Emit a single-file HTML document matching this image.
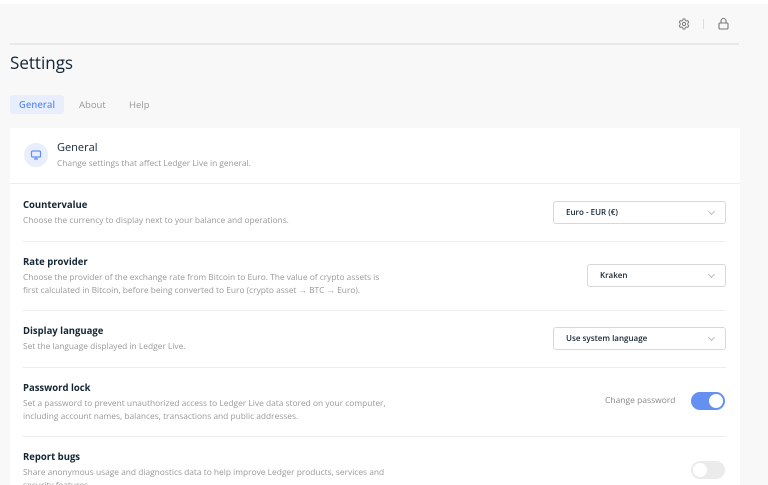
<!DOCTYPE html>
<html><head><meta charset="utf-8"><style>
*{margin:0;padding:0;box-sizing:border-box}
html,body{width:768px;height:485px;overflow:hidden}
body{background:#f8f8f8;font-family:"Open Sans","Liberation Sans","DejaVu Sans",sans-serif;position:relative;color:#142533}
.a{position:absolute}
.top{left:0;top:0;width:768px;height:4px;background:#fff}
.hr{left:10px;top:43px;width:729px;height:2px;background:#e8e8e8}
h1{position:absolute;left:10px;top:51px;font-size:17px;font-weight:400;color:#142533}
.tab{position:absolute;top:95px;height:19px;font-size:9.5px;line-height:19px;color:#999}
.card{left:10px;top:128px;width:730px;height:360px;background:#fff}
.t{font-size:9.5px;font-weight:700;color:#142533;position:absolute}
.d{font-size:8.4px;color:#999;position:absolute;line-height:12.5px}
.line{position:absolute;left:23px;width:703px;height:1px;background:#eee}
.sel{position:absolute;height:23px;border:1px solid #d8d8d8;border-radius:3px;font-size:8px;font-weight:600;color:#142533;line-height:21px;padding-left:12px}
.sel:after{content:"";position:absolute;right:11px;top:7px;width:4px;height:4px;border-right:1px solid #bbb;border-bottom:1px solid #bbb;transform:rotate(45deg)}
.tg{position:absolute;width:34px;height:18px;border-radius:9px}
.tg i{position:absolute;top:2px;width:14px;height:14px;border-radius:50%;background:#fff}
</style></head><body>
<div class="a top"></div>
<svg class="a" style="left:678px;top:18px" width="12" height="12" viewBox="0 0 12 12"><circle cx="6" cy="6" r="1.6" fill="none" stroke="#777" stroke-width="1"/><path d="M5 1h2l.3 1.4 1.2.7 1.3-.5 1 1.7-1 .9v1.6l1 .9-1 1.7-1.3-.5-1.2.7L7 11H5l-.3-1.4-1.2-.7-1.3.5-1-1.7 1-.9V5.2l-1-.9 1-1.7 1.3.5 1.2-.7z" fill="none" stroke="#777" stroke-width=".9"/></svg>
<div class="a" style="left:703px;top:19px;width:1px;height:10px;background:#ddd"></div>
<svg class="a" style="left:718px;top:17px" width="11" height="13" viewBox="0 0 11 13"><rect x="1" y="6" width="9" height="6" rx="1" fill="none" stroke="#777" stroke-width="1.1"/><path d="M3 6V4a2.5 2.5 0 0 1 5 0v2" fill="none" stroke="#777" stroke-width="1.1"/></svg>
<div class="a hr"></div>
<h1>Settings</h1>
<div class="tab" style="left:10px;width:54px;background:#e9eefc;border-radius:3px;color:#6490f1;text-align:center;font-weight:600">General</div>
<div class="tab" style="left:79px">About</div>
<div class="tab" style="left:129px">Help</div>
<div class="a card"></div>
<div class="a" style="left:24px;top:143px;width:24px;height:24px;border-radius:50%;background:#e9eefc"></div>
<svg class="a" style="left:30px;top:149px" width="12" height="12" viewBox="0 0 12 12"><rect x="1.5" y="2" width="9" height="6" rx="1" fill="none" stroke="#6490f1" stroke-width="1.2"/><path d="M6 8v2M4 10h4" stroke="#6490f1" stroke-width="1.2"/></svg>
<div class="a" style="left:57px;top:140px;font-size:11px;color:#142533">General</div>
<div class="d" style="left:57px;top:158px">Change settings that affect Ledger Live in general.</div>
<div class="a" style="left:10px;top:183px;width:730px;height:1px;background:#eee"></div>

<div class="t" style="left:23px;top:198px">Countervalue</div>
<div class="d" style="left:23px;top:215px">Choose the currency to display next to your balance and operations.</div>
<div class="sel" style="left:553px;top:201px;width:173px">Euro - EUR (€)</div>
<div class="line" style="top:241px"></div>

<div class="t" style="left:23px;top:255px">Rate provider</div>
<div class="d" style="left:23px;top:272px">Choose the provider of the exchange rate from Bitcoin to Euro. The value of crypto assets is<br>first calculated in Bitcoin, before being converted to Euro (crypto asset → BTC → Euro).</div>
<div class="sel" style="left:587px;top:264px;width:139px">Kraken</div>
<div class="line" style="top:310px"></div>

<div class="t" style="left:23px;top:324px">Display language</div>
<div class="d" style="left:23px;top:341px">Set the language displayed in Ledger Live.</div>
<div class="sel" style="left:553px;top:327px;width:173px">Use system language</div>
<div class="line" style="top:367px"></div>

<div class="t" style="left:23px;top:381px">Password lock</div>
<div class="d" style="left:23px;top:398px">Set a password to prevent unauthorized access to Ledger Live data stored on your computer,<br>including account names, balances, transactions and public addresses.</div>
<div class="a" style="left:605px;top:395px;font-size:8.5px;color:#888">Change password</div>
<div class="tg" style="left:691px;top:392px;background:#6490f1"><i style="right:2px"></i></div>
<div class="line" style="top:436px"></div>

<div class="t" style="left:23px;top:450px">Report bugs</div>
<div class="d" style="left:23px;top:467px">Share anonymous usage and diagnostics data to help improve Ledger products, services and<br>security features.</div>
<div class="tg" style="left:691px;top:461px;background:#ebebeb"><i style="left:2px"></i></div>
</body></html>
